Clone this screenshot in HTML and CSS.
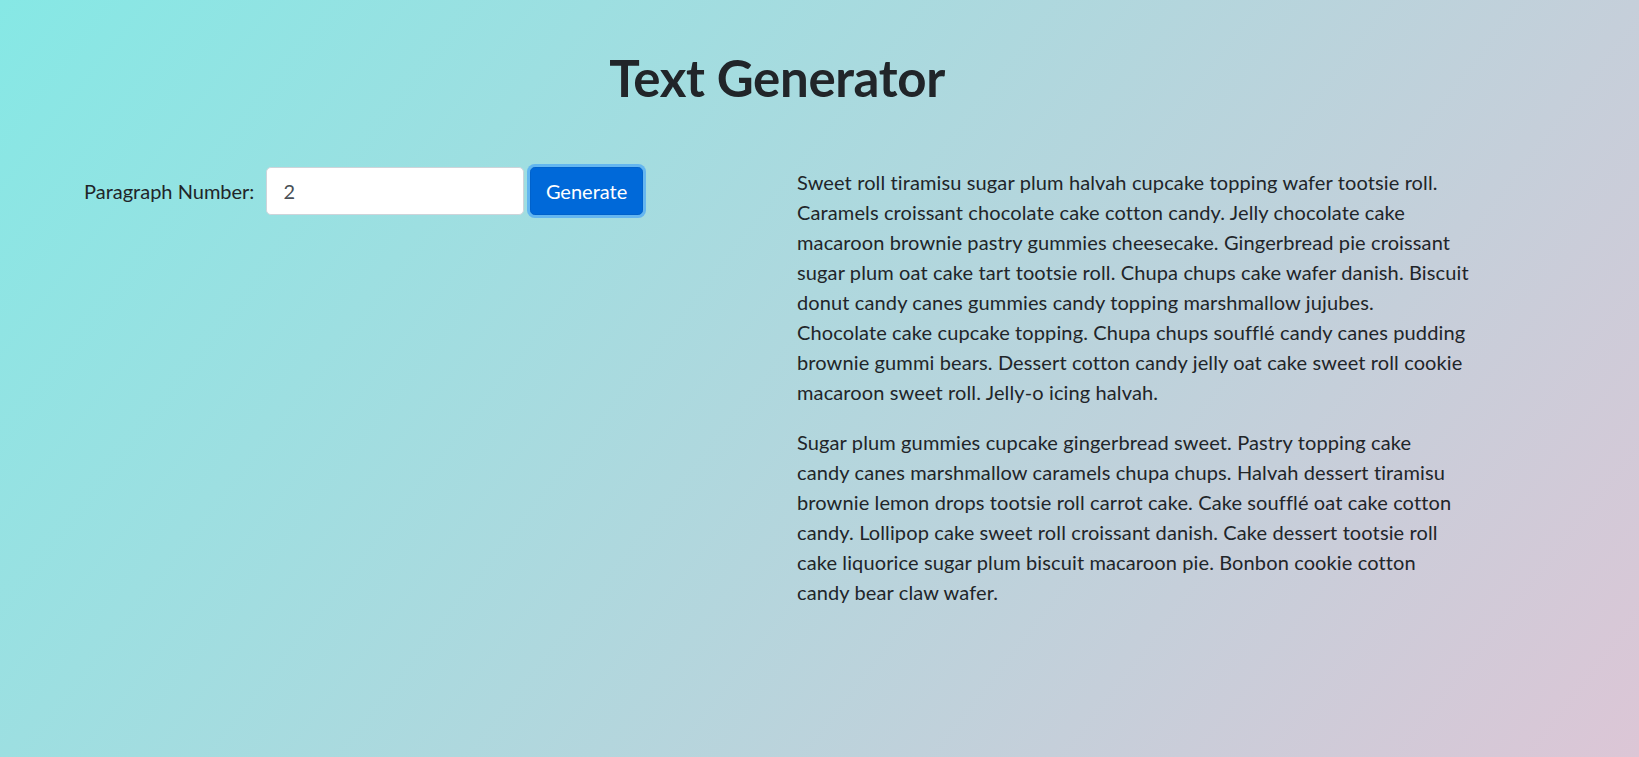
FILE: index.html
```html
<!DOCTYPE html>
<html lang="en">
<head>
<meta charset="utf-8">
<title>Text Generator</title>
<link rel="stylesheet" href="styles.css">
</head>
<body>
<div class="container">
  <h1 class="title">Text Generator</h1>
  <div class="row">
    <div class="col col-form">
      <form class="gen-form">
        <label class="gen-label" for="num">Paragraph Number:</label>
        <input class="gen-input" id="num" type="text" inputmode="numeric" value="2">
        <button class="gen-btn" type="button">Generate</button>
      </form>
    </div>
    <div class="col col-text">
      <p class="para">Sweet roll tiramisu sugar plum halvah cupcake topping wafer tootsie roll.<br>Caramels croissant chocolate cake cotton candy. Jelly chocolate cake<br>macaroon brownie pastry gummies cheesecake. Gingerbread pie croissant<br>sugar plum oat cake tart tootsie roll. Chupa chups cake wafer danish. Biscuit<br>donut candy canes gummies candy topping marshmallow jujubes.<br>Chocolate cake cupcake topping. Chupa chups soufflé candy canes pudding<br>brownie gummi bears. Dessert cotton candy jelly oat cake sweet roll cookie<br>macaroon sweet roll. Jelly-o icing halvah.</p>
      <p class="para">Sugar plum gummies cupcake gingerbread sweet. Pastry topping cake<br>candy canes marshmallow caramels chupa chups. Halvah dessert tiramisu<br>brownie lemon drops tootsie roll carrot cake. Cake soufflé oat cake cotton<br>candy. Lollipop cake sweet roll croissant danish. Cake dessert tootsie roll<br>cake liquorice sugar plum biscuit macaroon pie. Bonbon cookie cotton<br>candy bear claw wafer.</p>
    </div>
  </div>
</div>
</body>
</html>
```
FILE: styles.css
```css
* { box-sizing: border-box; }

html, body {
  margin: 0;
  height: 100%;
}

body {
  font-family: Lato, "Open Sans", sans-serif;
  color: #212529;
  font-size: 20px;
  line-height: 1.5;
  background: linear-gradient(128deg, #86e8e5 0%, #dcc6d6 100%);
  min-height: 757px;
}

.container {
  width: 1386px;
  margin-left: 84px;
  padding-top: 47px;
}

.title {
  margin: 0 0 59px;
  text-align: center;
  font-size: 51px;
  font-weight: 700;
  letter-spacing: -0.35px;
  line-height: 1.2;
  color: #212529;
}

.row {
  display: grid;
  grid-template-columns: 693px 1fr;
}

.gen-form {
  display: flex;
  align-items: center;
  margin: 0;
}

.gen-label {
  font-size: 20px;
  margin-right: 12px;
}

.gen-input {
  width: 258px;
  height: 48px;
  padding: 8px 16px;
  font-family: inherit;
  font-size: 20px;
  line-height: 1.5;
  color: #495057;
  background: #fff;
  border: 1px solid #ced4da;
  border-radius: 4.8px;
  outline: none;
}

.gen-btn {
  margin-left: 6px;
  height: 48px;
  padding: 8px 14.5px;
  font-family: inherit;
  font-size: 20px;
  line-height: 1.5;
  color: #fff;
  background: #0069d9;
  border: 1px solid #0062cc;
  border-radius: 4.8px;
  box-shadow: 0 0 0 3px rgba(38, 143, 255, 0.5);
  cursor: pointer;
}

.col-text {
  padding-left: 20px;
}

.para {
  margin: 0 0 20px;
  white-space: nowrap;
  letter-spacing: 0.12px;
}
```
